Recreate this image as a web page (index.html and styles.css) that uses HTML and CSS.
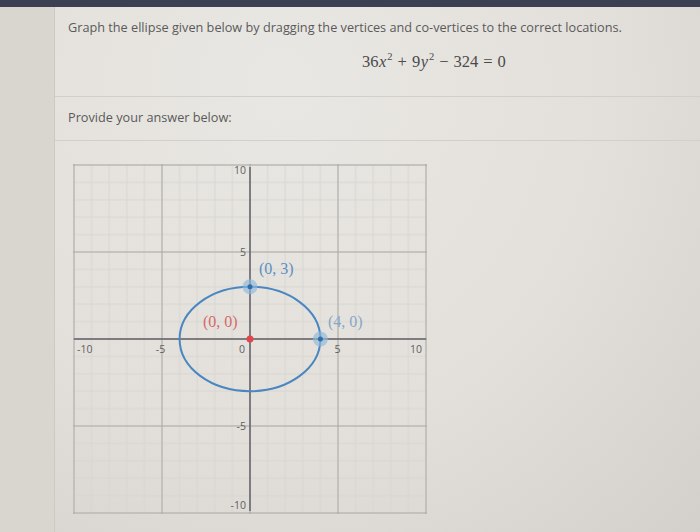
FILE: index.html
```html
<!DOCTYPE html>
<html>
<head>
<meta charset="utf-8">
<link rel="stylesheet" href="styles.css">
</head>
<body>
<div class="topbar"></div>
<div class="page">
  <aside class="sidebar"></aside>
  <main class="content">
    <section class="question">
      <p class="prompt">Graph the ellipse given below by dragging the vertices and co-vertices to the correct locations.</p>
      <div class="equation">36<i>x</i><sup>2</sup><span class="op">+</span>9<i>y</i><sup>2</sup><span class="op">−</span>324<span class="op">=</span>0</div>
    </section>
    <section class="answer-head">
      <p class="prompt">Provide your answer below:</p>
    </section>
    <section class="graph-wrap">
      <svg class="graph" width="354" height="350" viewBox="0 0 354 350">
        <defs>
          <pattern id="minor" patternUnits="userSpaceOnUse" x="-7.8" y="-7.7" width="17.6" height="17.4">
            <path d="M8.8 0 V17.4 M0 8.7 H17.6" stroke="#d8d6d2" stroke-width="1" fill="none"/>
          </pattern>
          <pattern id="major" patternUnits="userSpaceOnUse" x="-43" y="-42.5" width="88" height="87">
            <path d="M44 0 V87 M0 43.5 H88" stroke="#aba9a6" stroke-width="1" fill="none"/>
          </pattern>
        </defs>
        <rect x="0" y="0" width="354" height="350" fill="url(#minor)"/>
        <rect x="0" y="0" width="354" height="350" fill="url(#major)"/>
        <line x1="177" y1="3" x2="177" y2="347" stroke="#66636c" stroke-width="1.5"/>
        <line x1="1" y1="175" x2="353" y2="175" stroke="#66636c" stroke-width="1.5"/>
        <g class="tick-labels">
          <text x="173" y="10" text-anchor="end">10</text>
          <text x="173" y="92" text-anchor="end">5</text>
          <text x="173" y="266" text-anchor="end">-5</text>
          <text x="173" y="345" text-anchor="end">-10</text>
          <text x="4" y="188.5">-10</text>
          <text x="87.5" y="188.5" text-anchor="middle">-5</text>
          <text x="172" y="188.5" text-anchor="end">0</text>
          <text x="264.5" y="188.5" text-anchor="middle">5</text>
          <text x="349" y="188.5" text-anchor="end">10</text>
        </g>
        <ellipse cx="177" cy="175" rx="70.4" ry="52.2" fill="none" stroke="#4a87c0" stroke-width="2"/>
        <circle cx="177" cy="122.8" r="7.5" fill="#8db7dc" fill-opacity="0.65"/>
        <circle cx="177" cy="122.8" r="2.5" fill="#2f6ea8"/>
        <circle cx="247.4" cy="175" r="7.5" fill="#8db7dc" fill-opacity="0.65"/>
        <circle cx="247.4" cy="175" r="2.5" fill="#2f6ea8"/>
        <circle cx="177" cy="175" r="3.5" fill="#e0474c"/>
        <text class="pt-label blue" x="186" y="110">(0, 3)</text>
        <text class="pt-label red" x="130" y="163">(0, 0)</text>
        <text class="pt-label pale" x="255" y="163">(4, 0)</text>
      </svg>
    </section>
  </main>
</div>
</body>
</html>
```
FILE: styles.css
```css
html, body {
  margin: 0;
  padding: 0;
}
body {
  width: 700px;
  height: 532px;
  overflow: hidden;
  font-family: "Open Sans", "DejaVu Sans", sans-serif;
  color: #5a5a5a;
  background: #e3e0db;
}
.topbar {
  height: 7px;
  background: #3b4152;
}
.page {
  display: flex;
  height: 525px;
}
.sidebar {
  width: 54px;
  flex: none;
  background: #d9d6d0;
  border-right: 1px solid #cdcac4;
}
.content {
  flex: 1;
  background: radial-gradient(ellipse at 35% 15%, #e9e7e3 0%, #e3e0db 55%, #d3cfca 100%);
}
.question {
  box-sizing: border-box;
  height: 90px;
  padding: 11px 0 0 13px;
  border-bottom: 1px solid #d2cfca;
}
.prompt {
  margin: 0;
  font-size: 12.7px;
  line-height: 18px;
}
.equation {
  margin-top: 16px;
  padding-left: 294px;
  font-family: "Liberation Serif", "DejaVu Serif", serif;
  font-size: 16.5px;
  line-height: 20px;
  color: #4a4a4a;
}
.equation i {
  margin-left: 0.5px;
}
.equation sup {
  font-size: 10.5px;
  line-height: 0;
  vertical-align: 7px;
  margin-left: 1px;
}
.equation .op {
  margin: 0 5px;
}
.answer-head {
  box-sizing: border-box;
  height: 44px;
  padding: 11px 0 0 13px;
  border-bottom: 1px solid #d2cfca;
}
.graph-wrap {
  padding: 23px 0 0 18px;
}
.graph {
  display: block;
}
.tick-labels text {
  font-family: "Open Sans", "DejaVu Sans", sans-serif;
  font-size: 10.5px;
  fill: #5f5f5f;
}
.pt-label {
  font-family: "Liberation Serif", "DejaVu Serif", serif;
  font-size: 16px;
}
.blue { fill: #5a8fc2; }
.red { fill: #d36a6a; }
.pale { fill: #86a8c6; }
```
